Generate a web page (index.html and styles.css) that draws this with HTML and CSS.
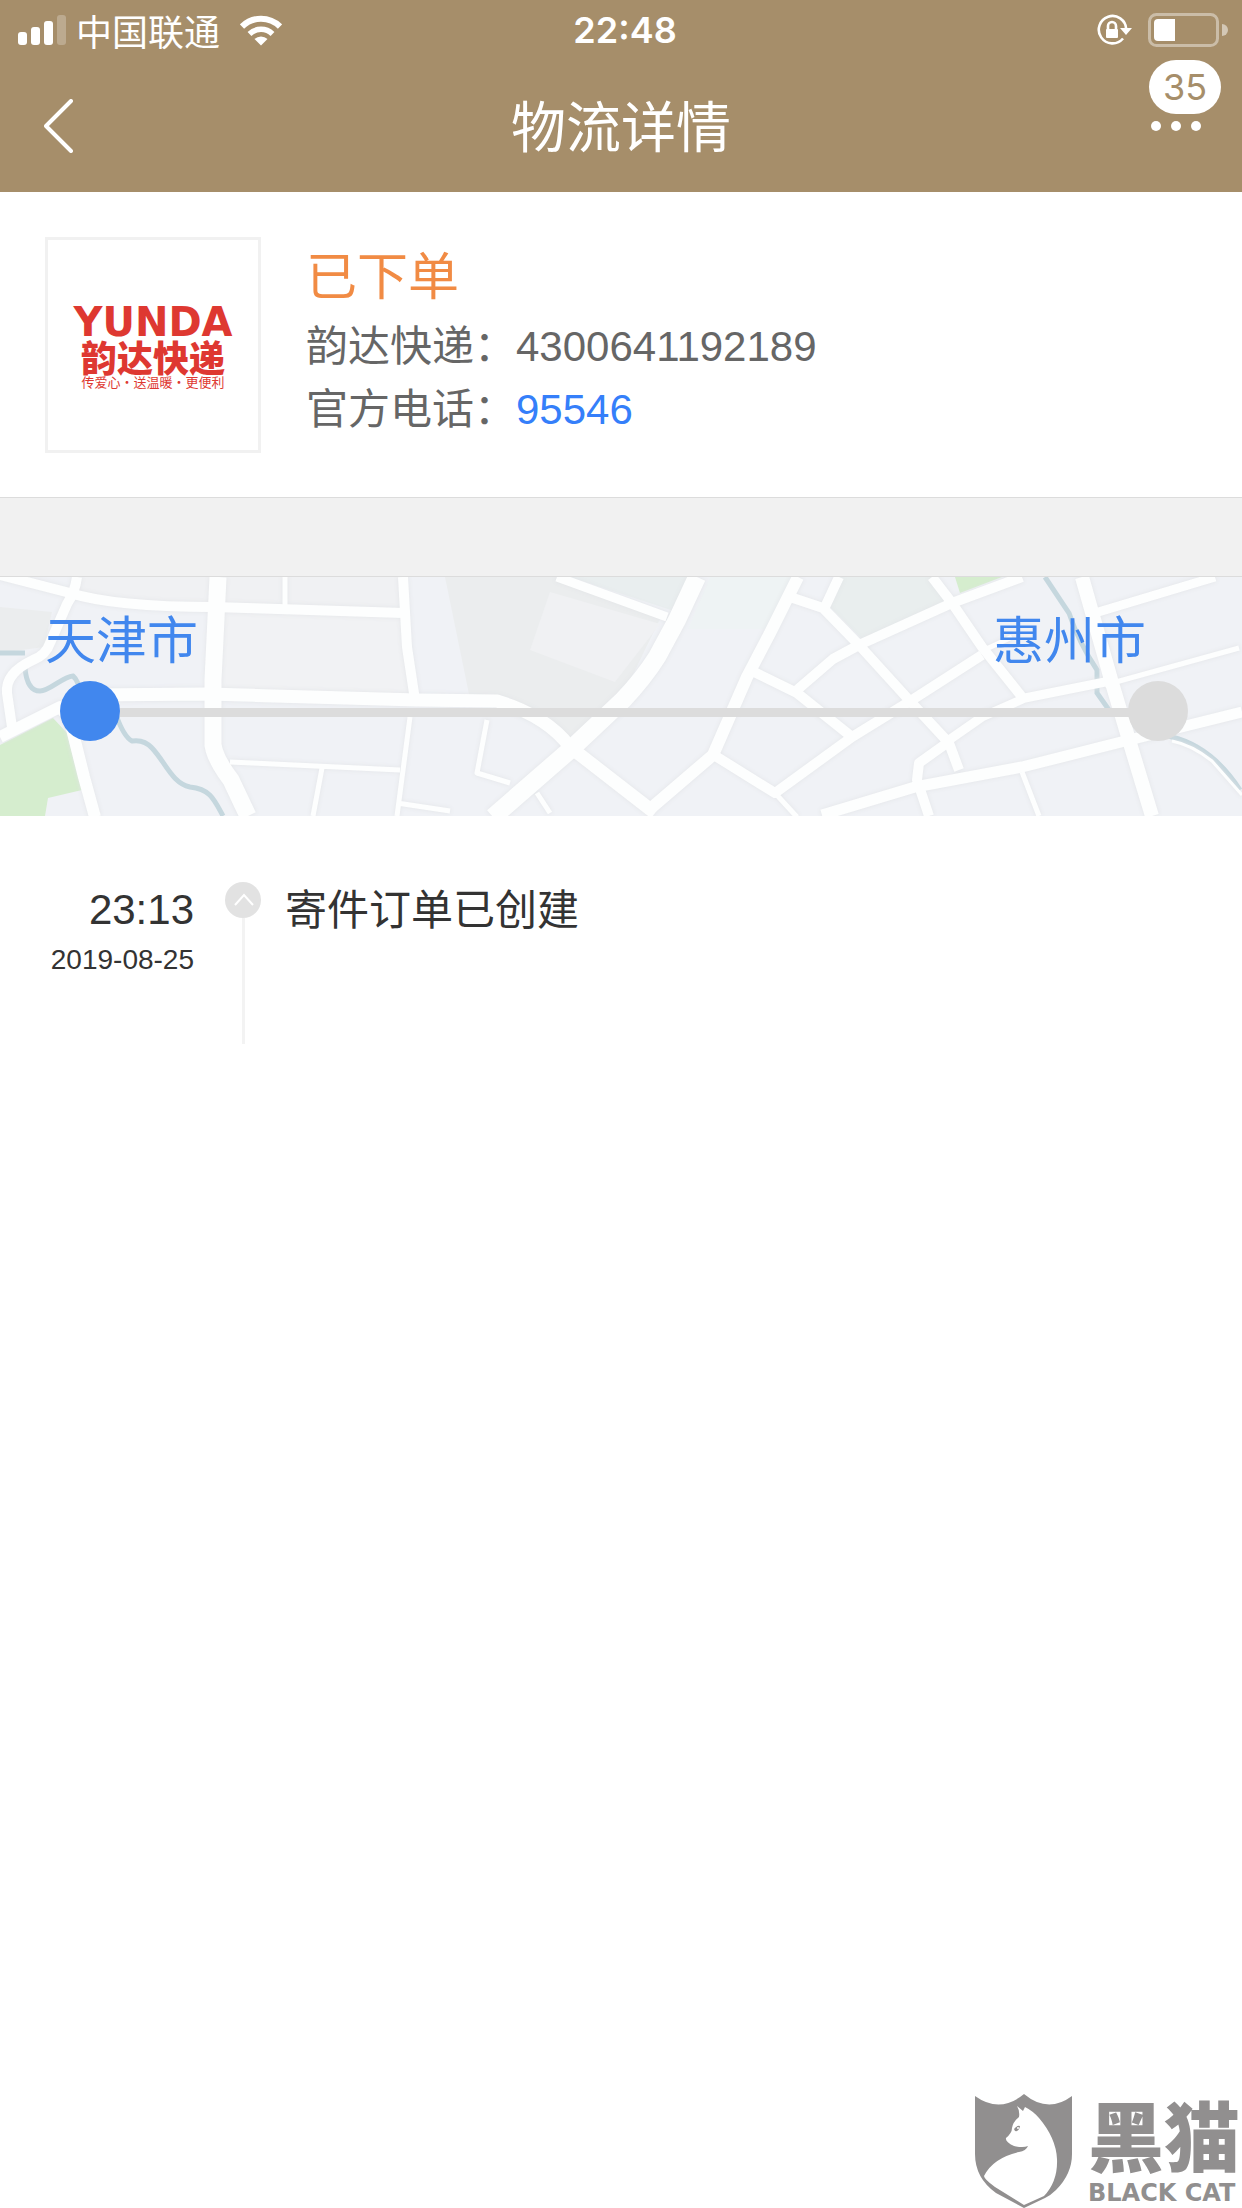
FILE: index.html
```html
<!DOCTYPE html>
<html lang="zh-CN">
<head>
  <meta charset="UTF-8" />
  <meta name="viewport" content="width=device-width, initial-scale=1.0" />
  <title>物流详情</title>
  <link rel="stylesheet" href="styles.css">
</head>
<body>
  <header>
    <div class="status-bar">
      <div class="status-left">
        <svg class="signal" width="48" height="30" viewBox="0 0 48 30" fill="#fff">
          <rect x="0" y="17" width="9" height="13" rx="3"/>
          <rect x="13" y="12" width="9" height="18" rx="3"/>
          <rect x="26" y="6" width="9" height="24" rx="3"/>
          <rect x="39" y="0" width="9" height="30" rx="3" opacity=".25"/>
        </svg>
        <span class="carrier">中国联通</span>
        <svg class="wifi" width="42" height="31" viewBox="0 0 42 31" fill="none" stroke="#fff" stroke-width="6">
          <path d="M2 11.5a27 27 0 0 1 38 0"/>
          <path d="M9.500 19a16.500 16.500 0 0 1 23 0" stroke-width="5.500"/>
          <path d="M21 30.500l-6.500-6.500a9.500 9.500 0 0 1 13 0z" fill="#fff" stroke="none"/>
        </svg>
      </div>
      <span class="clock">22:48</span>
      <div class="status-right">
        <svg width="35" height="32" viewBox="0 0 35 32" fill="none" stroke="#fff" stroke-width="2.600">
          <path d="M26 24.500a13.700 13.700 0 1 1 3.200-9.500"/>
          <path d="M23 14h12l-6 7z" fill="#fff" stroke="none"/>
          <rect x="9" y="15" width="12" height="9" rx="1" fill="#fff" stroke="none"/>
          <path d="M11 16v-4a4 4 0 0 1 8 0v4"/>
        </svg>
        <svg width="84" height="34" viewBox="0 0 84 34">
          <rect x="1.500" y="1.500" width="68" height="31" rx="7" fill="none" stroke="#fff" stroke-width="3" opacity=".42"/>
          <path d="M10 6h17v22H10a4 4 0 0 1-4-4V10a4 4 0 0 1 4-4z" fill="#fff"/>
          <path d="M74 11a6 6 0 0 1 0 12z" fill="#fff" opacity=".5"/>
        </svg>
      </div>
    </div>
    <nav class="nav-bar">
      <button class="back" aria-label="返回">
        <svg width="30" height="54" viewBox="0 0 30 54" fill="none" stroke="#fff" stroke-width="4" stroke-linecap="round" stroke-linejoin="round">
          <path d="M27 2L2 27l25 25"/>
        </svg>
      </button>
      <h1>物流详情</h1>
      <button class="more" aria-label="更多">
        <svg width="52" height="12" viewBox="0 0 52 12" fill="#fff">
          <circle cx="6" cy="6" r="5"/>
          <circle cx="26" cy="6" r="5"/>
          <circle cx="46" cy="6" r="5"/>
        </svg>
        <span class="badge">35</span>
      </button>
    </nav>
  </header>

  <main>
    <section class="express">
      <div class="logo">
        <span class="logo-en">YUNDA</span>
        <span class="logo-cn">韵达快递</span>
        <span class="logo-slogan">传爱心·送温暖·更便利</span>
      </div>
      <div class="express-info">
        <h2>已下单</h2>
        <p>韵达快递：4300641192189</p>
        <p>官方电话：<a href="tel:95546">95546</a></p>
      </div>
    </section>

    <div class="divider"></div>

    <section class="route">
      <svg class="map" viewBox="0 0 1242 239" preserveAspectRatio="xMidYMid slice" fill="none" aria-hidden="true">
        <rect width="1242" height="239" fill="#f0f2f6"/>
        <!-- blocks -->
        <path d="M0 30l52 5-8 35-44 6z" fill="#ebedee"/>
        <path d="M77 0h326v36L213 30 70 18z" fill="#f0f1f3"/>
        <path d="M213 34l190 4 10 84-200-5z" fill="#f1f2f4"/>
        <path d="M445 0h110l105 42-38 78-52 40-70-38h-30z" fill="#ebedee"/>
        <path d="M550 15l110 32-45 58-85-32z" fill="#f0f1f3"/>
        <path d="M570 0h118l-14 34z" fill="#e9eeef"/>
        <path d="M710 0h84l-26 52h-80z" fill="#eef3f4"/>
        <path d="M840 0h92l15 26-85 36-34-34z" fill="#e9eeee"/>
        <!-- parks -->
        <path d="M0 168l53-27 14 15 15 57-34 8-3 18H0z" fill="#d5edce"/>
        <path d="M955 0l5 16 42-16z" fill="#d5edce"/>
        <!-- rivers -->
        <g class="rivers">
          <path d="M0 76h25M25 91q2 23 15 23c10 0 22-14 33-15q6 5 8 20"/>
          <path d="M116 138q8 22 16 26 12-2 20 7c14 15 20 35 38 39 20 2 24 12 33 29"/>
          <path d="M1045 0l24 36q10 30 28 57v23l12 17q28 20 63 27 40 10 68 53"/>
        </g>
        <!-- streets -->
        <g class="streets">
          <path d="M0-2l70 18q45 14 143 14l190 6" stroke-width="10"/>
          <path d="M77 0q-2 15-10 27L50 66q-4 12-17 17Q5 96 7 116l5 34" stroke-width="10"/>
          <path d="M218 0l-5 103v65q2 14 18 35l17 36" stroke-width="17"/>
          <path d="M90 118l117-1 210 6 80 1q50 15 73 46l85 66" stroke-width="13"/>
          <path d="M0 160l60-30q10 10 14 30l10 40 11 40" stroke-width="12"/>
          <path d="M403 0l4 70 8 53" stroke-width="10"/>
          <path d="M697 0l-20 43-20 37q-14 22-34 43l-53 50-77 67" stroke-width="18"/>
          <path d="M557 0l110 40" stroke-width="9"/>
          <path d="M798 0l-28 56-23 44-34 78-63 54" stroke-width="12"/>
          <path d="M750 93l47 23 55 44M793 21l30 10 36 37 50 55 40 43 10 27" stroke-width="10"/>
          <path d="M797 113l36-31 26-14 93-42 70-26M839 0l-14 30" stroke-width="10"/>
          <path d="M717 180l58 36 77-56 60-37 70-45" stroke-width="10"/>
          <path d="M932 0l20 26 30 44 40 50" stroke-width="10"/>
          <path d="M1082 0l13 46 17 60 17 57 23 76" stroke-width="14"/>
          <path d="M1095 36l120-36M949 163l33-23 43-19 80-16" stroke-width="9"/>
          <path d="M822 238l93-28 107-20 107-27 113-28" stroke-width="11"/>
          <path d="M947 166l-28 20-2 17 12 36" stroke-width="10"/>
          <path d="M1105 108l134-37M775 216l22 24M1022 195l17 44M982 74l30-14" stroke-width="5"/>
          <path d="M230 185l170 8M410 140l-13 99M322 191l-9 48M285 0v28M397 226l53 8M487 143l-10 53 33 10M537 216l13 20" stroke-width="5"/>
          <path d="M1172 164q20 4 40 20l30 34" stroke-width="3"/>
        </g>
      </svg>
      <div class="cities">
        <span>天津市</span>
        <span>惠州市</span>
      </div>
      <div class="track">
        <i class="dot dot-from"></i>
        <i class="bar"></i>
        <i class="dot"></i>
      </div>
    </section>

    <ol class="timeline">
      <li>
        <div class="when">
          <time class="hour">23:13</time>
          <time class="date">2019-08-25</time>
        </div>
        <div class="marker">
          <svg width="36" height="36" viewBox="0 0 36 36" fill="none">
            <circle cx="18" cy="18" r="18" fill="#e2e2e2"/>
            <path d="M10 23l9-10 9 10" stroke="#fff" stroke-width="2"/>
          </svg>
        </div>
        <p>寄件订单已创建</p>
      </li>
    </ol>
  </main>

  <footer>
    <svg width="98" height="114" viewBox="0 0 98 114">
      <path d="M0 2q25 18 49-2 24 20 48 2v58q0 20-16 36-5 5-11 8L49 114l-28-15Q0 84 0 60z" fill="#918f8f"/>
      <path d="M42 12l6 5 2-4q8 4 14 11 17 20 18 41 1 22-13 37L49 111 20 93Q9 85 9 82q9-18 35-24 7-1 9-6-5 2-14 0-9-4-8-8 6-5 6-10 1-6 7-11 1-6-2-11z" fill="#fff"/>
      <path d="M39 35q3-4 6-3-1 6-5 5z" fill="#918f8f"/>
      <circle cx="43" cy="34" r="1" fill="#fff"/>
    </svg>
    <div class="mark">
      <strong>黑猫</strong>
      <span>BLACK CAT</span>
    </div>
  </footer>
</body>
</html>
```
FILE: styles.css
```css
:root {
  --brand: #a68e6a;
  --blue: #4187ee;
  --grey: #dcdcdc;
  --text: #333;
  --cjk: "Noto Sans CJK SC", sans-serif;
}
* {
  box-sizing: border-box;
  margin: 0;
  padding: 0;
}
body {
  min-height: 100vh;
  display: flex;
  flex-direction: column;
  font-family: "Liberation Sans", var(--cjk);
  font-size: 42px;
  line-height: 63px;
  color: var(--text);
  background: #fff;
}
svg {
  display: block;
}
button {
  background: none;
  border: none;
  cursor: pointer;
}

header {
  background: var(--brand);
  color: #fff;
}
.status-bar {
  display: grid;
  grid-template-columns: 1fr auto 1fr;
  align-items: center;
  height: 60px;
  padding: 0 10px 0 18px;
}
.status-left,
.status-right {
  display: flex;
  align-items: center;
}
.status-right {
  justify-content: flex-end;
  gap: 16px;
}
.carrier {
  margin: 0 20px 0 10px;
  font: 400 36px/60px var(--cjk);
}
.clock {
  font: 600 36px/60px Inter, sans-serif;
}
.nav-bar {
  display: grid;
  grid-template-columns: 1fr auto 1fr;
  align-items: center;
  height: 132px;
  padding: 0 40px;
}
.back {
  justify-self: start;
  padding: 4px;
}
h1 {
  padding-bottom: 6px;
  font: 400 55px/80px var(--cjk);
}
.more {
  position: relative;
  justify-self: end;
}
.badge {
  position: absolute;
  left: -1px;
  bottom: 18px;
  width: 72px;
  border-radius: 27px;
  background: #fff;
  color: var(--brand);
  font: 400 36px/54px Inter, sans-serif;
  text-align: center;
}

.express {
  display: flex;
  gap: 45px;
  padding: 45px 45px 44px;
}
.logo {
  display: flex;
  flex-direction: column;
  align-items: center;
  justify-content: center;
  width: 216px;
  height: 216px;
  padding-top: 6px;
  border: 3px solid #f1f1f1;
  color: #de3831;
  white-space: nowrap;
}
.logo-en {
  font: bold 40px/32px "DejaVu Sans", sans-serif;
}
.logo-cn {
  font: 900 36px/36px var(--cjk);
}
.logo-slogan {
  font: 400 13px/16px var(--cjk);
}
h2 {
  margin-bottom: 6px;
  font: 400 51px/72px var(--cjk);
  color: #f18b44;
}
.express-info p {
  color: #666;
}
.express-info a {
  color: #357ffa;
  text-decoration: none;
}

.divider {
  height: 80px;
  background: #f1f1f1;
  border-top: 1px solid var(--grey);
  border-bottom: 1px solid var(--grey);
}

.route {
  position: relative;
  height: 239px;
  padding-top: 20px;
}
/* map lies behind the route */
.map {
  position: absolute;
  inset: 0;
  z-index: -1;
  width: 100%;
  height: 100%;
}
.rivers {
  stroke: #c5d7de;
  stroke-width: 5;
}
.streets {
  stroke: #fdfefe;
  stroke-linejoin: round;
  filter: drop-shadow(0 0 2px #e2e4e7);
}
.cities {
  display: flex;
  justify-content: space-between;
  padding: 0 96px 4px 45px;
  font: 400 51px/80px var(--cjk);
  color: var(--blue);
}
.track {
  display: flex;
  align-items: center;
  padding: 0 54px 0 60px;
}
.dot {
  width: 60px;
  height: 60px;
  border-radius: 50%;
  background: var(--grey);
}
.dot-from {
  background: var(--blue);
}
.bar {
  flex: 1;
  height: 9px;
  margin: 2px -4px 0 0;
  background: var(--grey);
}

.timeline {
  list-style: none;
  padding: 66px 45px 0;
}
.timeline li {
  display: flex;
  min-height: 162px;
}
.when {
  display: flex;
  flex-direction: column;
  width: 149px;
  padding-top: 12px;
  text-align: right;
}
.hour {
  line-height: 32px;
}
.date {
  margin-top: 14px;
  font-size: 28px;
  line-height: 40px;
}
.marker {
  display: flex;
  flex-direction: column;
  align-items: center;
  width: 36px;
  margin: 0 24px 0 31px;
}
.marker::after {
  content: "";
  flex: 1;
  width: 3px;
  background: #f3f3f3;
}
.timeline p {
  line-height: 58px;
}

footer {
  display: flex;
  gap: 15px;
  align-items: flex-end;
  align-self: flex-end;
  margin-top: auto;
  padding-right: 2px;
  color: #918f8f;
}
.mark {
  display: flex;
  flex-direction: column;
}
.mark strong {
  font: 900 76px/90px var(--cjk);
}
.mark span {
  font: bold 24px/30px "DejaVu Sans", sans-serif;
}
```
